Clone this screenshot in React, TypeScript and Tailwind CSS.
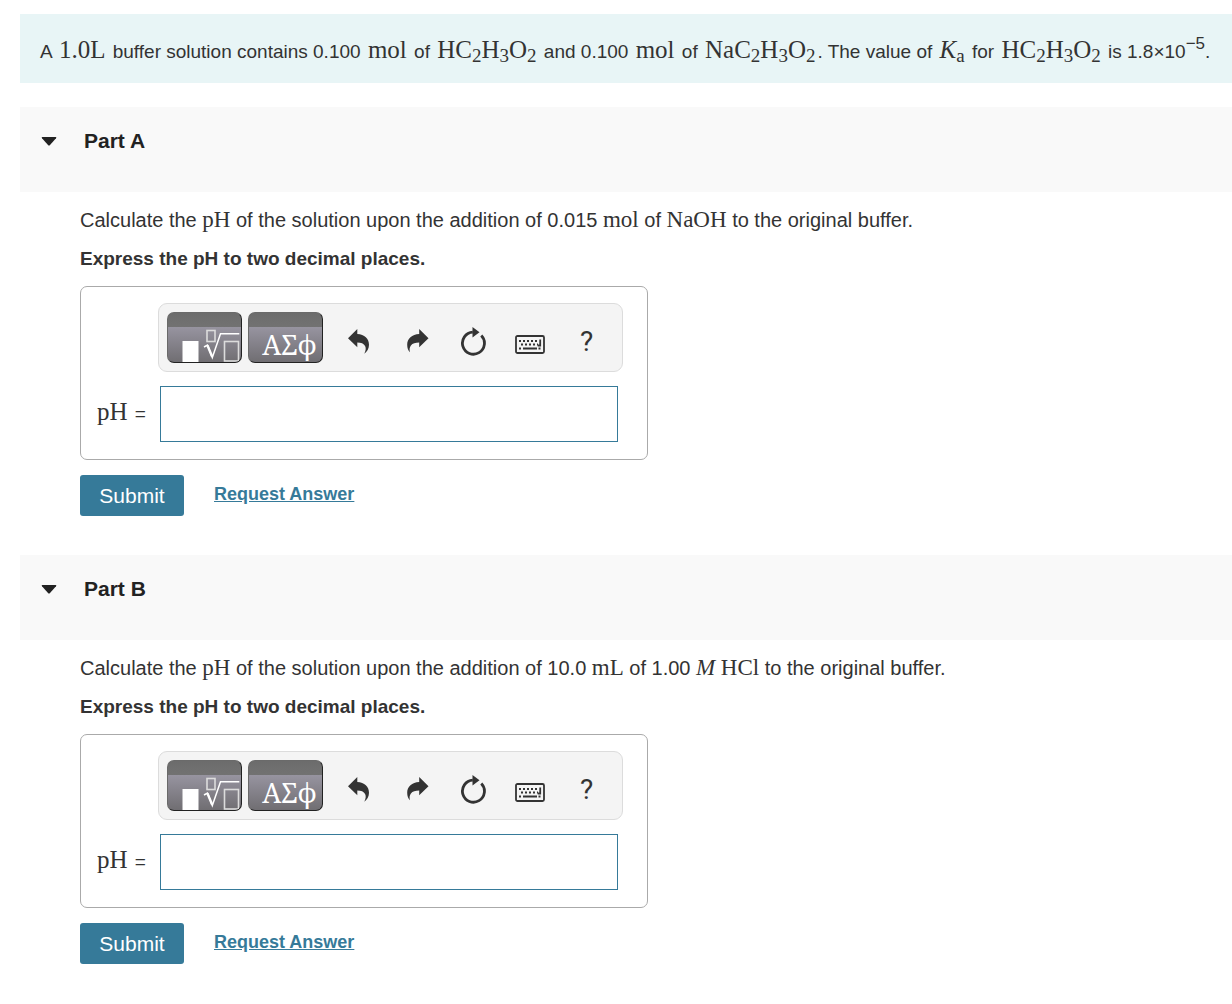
import type { ReactNode } from "react";

type MathProps = {
  children: ReactNode;
  italic?: boolean;
  large?: boolean;
};

function MathText({ children, italic = false, large = false }: MathProps) {
  const size = large ? "mx-0.5 text-[25px]" : "text-[23px]";
  const style = italic ? "italic" : "";
  return <span className={`font-['Liberation_Serif',serif] leading-none ${size} ${style}`}>{children}</span>;
}

function Sub({ children }: { children: ReactNode }) {
  return <sub className="bottom-[-4px] text-[19px] not-italic">{children}</sub>;
}

function AceticAcid({ prefix }: { prefix: string }) {
  return (
    <MathText large>
      {prefix}C<Sub>2</Sub>H<Sub>3</Sub>O<Sub>2</Sub>
    </MathText>
  );
}

function TemplateIcon() {
  return (
    <svg width="73" height="49" viewBox="0 0 73 49" fill="none" aria-hidden="true">
      <rect x="14.5" y="28" width="16" height="21" fill="#fff" />
      <rect x="39" y="17.5" width="8" height="11" stroke="#dcdcdc" strokeWidth="1.6" />
      <path d="M36 34l3.500-2 4.800 12.500 8.200-23.700h18.800" stroke="#fff" strokeWidth="1.500" />
      <path d="M39.500 32.500l4.600 11" stroke="#fff" strokeWidth="2.400" />
      <rect x="56.500" y="28.500" width="14" height="19.500" stroke="#dcdcdc" strokeWidth="1.600" />
    </svg>
  );
}

function UndoIcon() {
  return (
    <svg width="22" height="25" viewBox="0 0 22 25" fill="#333" aria-hidden="true">
      <path d="M0 9.300L9.300 0v5C16.500 5.300 21 9.500 21 15.700c0 4-2 7-4.700 9 1.500-3 1.900-5.500.8-7.600-1.300-2.500-4-3.500-7.800-3.500v4.700z" />
    </svg>
  );
}

function RedoIcon() {
  return (
    <svg width="26" height="25" viewBox="-4 0 26 25" fill="#333" aria-hidden="true">
      <path d="M21.500 9.300L12.200 0v5C5 5.300.200 9.500.200 15.700c0 3 .8 5.500 2.800 7.600-.8-3-.4-5 .9-6.800 1.700-2.200 4.500-2.900 8.300-2.900v4.700z" />
    </svg>
  );
}

function ResetIcon() {
  return (
    <svg width="26" height="30" viewBox="0 0 26 30" fill="none" aria-hidden="true">
      <path d="M21.300 8.500A11 11 0 1 1 12.800 5.200" stroke="#333" strokeWidth="2.800" />
      <path d="M12.500 0l7 5.200-7 5.400z" fill="#333" />
    </svg>
  );
}

function KeyboardIcon() {
  return (
    <svg width="30" height="19" viewBox="0 0 30 19" fill="none" aria-hidden="true">
      <rect x="1" y="1" width="28" height="17" rx="1.500" stroke="#333" strokeWidth="1.800" />
      <path d="M4 6h19M6 9.500h17M4 13.500h2.500M23.500 13.500h2.500" stroke="#333" strokeWidth="2" strokeDasharray="2 2" />
      <path d="M8 13.500h14M25.200 4.500v6h-2.500" stroke="#333" strokeWidth="1.800" />
    </svg>
  );
}

const paletteClass =
  "h-[51px] w-[75px] overflow-hidden rounded-[7px] border border-[#6a6a6a] border-r-[#222] border-b-[#222] bg-[linear-gradient(#6c6c6c_0,#727272_14px,#9794a0_14px,#706e72_100%)]";

const toolClass = "flex w-[57px] justify-center";

function Toolbar() {
  return (
    <div className="flex h-[69px] w-[465px] items-center rounded-[9px] border border-[#dcdcdc] bg-[#f4f4f4] pl-2">
      <div className="flex gap-1.5">
        <button type="button" aria-label="Templates" className={paletteClass}>
          <TemplateIcon />
        </button>
        <button
          type="button"
          aria-label="Symbols"
          className={`${paletteClass} pt-3.5 pl-2 text-center font-['Noto_Serif','Liberation_Serif',serif] text-[27px] leading-8 text-white`}
        >
          ΑΣϕ
        </button>
      </div>
      <div className="ml-[7px] grid h-full grid-cols-5 place-items-center pt-2">
        <button type="button" aria-label="Undo" className={toolClass}>
          <UndoIcon />
        </button>
        <button type="button" aria-label="Redo" className={toolClass}>
          <RedoIcon />
        </button>
        <button type="button" aria-label="Reset" className={toolClass}>
          <ResetIcon />
        </button>
        <button type="button" aria-label="Keyboard shortcuts" className={`${toolClass} pt-1.5`}>
          <KeyboardIcon />
        </button>
        <button
          type="button"
          aria-label="Help"
          className={`${toolClass} font-['Roboto',sans-serif] text-[28px] leading-8 text-[#333]`}
        >
          ?
        </button>
      </div>
    </div>
  );
}

type PartProps = {
  id: string;
  title: string;
  children: ReactNode;
};

function Part({ id, title, children }: PartProps) {
  return (
    <section className="mb-[39px]">
      <header className="flex h-[85px] bg-[#f9f9f9] pt-5 pl-5">
        <h2>
          <button type="button" aria-expanded="true" className="flex h-7 items-center gap-[27px] text-[21px] font-bold text-[#222]">
            <svg width="17" height="10" viewBox="0 0 17 10" fill="#222" aria-hidden="true">
              <path d="M2.500 1h13q1.500 0 .5 1.200L10 9q-1 1-2 0L2 2.200Q1 1 2.500 1z" />
            </svg>
            {title}
          </button>
        </h2>
      </header>
      <div className="pl-15">
        <p className="mt-3 h-8 text-[20px] leading-8">{children}</p>
        <p className="mt-[7px] h-8 leading-8 font-bold">Express the pH to two decimal places.</p>
        <div className="mt-[11px] h-[174px] w-[568px] rounded-[7px] border border-[#aaa] pt-4">
          <div className="pl-[77px]">
            <Toolbar />
          </div>
          <div className="mt-3.5 flex items-center pl-3.5">
            <label htmlFor={id} className="w-[65px] whitespace-nowrap">
              <MathText large>pH</MathText> =
            </label>
            <input id={id} type="text" className="h-14 w-[458px] border border-[#367a99] bg-white px-2" />
          </div>
        </div>
        <div className="mt-[15px] flex">
          <button type="button" className="h-[41px] w-[104px] rounded-[3px] bg-[#367a99] text-[21px] leading-[39px] text-white">
            Submit
          </button>
          <a href="#request" className="ml-[30px] text-[18px] leading-[38px] font-bold text-[#367a99] underline">
            Request Answer
          </a>
        </div>
      </div>
    </section>
  );
}

export default function App() {
  return (
    <main className="overflow-x-hidden bg-white pt-3.5 pl-5 font-['Liberation_Sans',sans-serif] text-[19px] text-[#333]">
      <div className="mb-6 flex h-[69px] items-center bg-[#e8f5f6] pt-1.5 pl-5">
        <p className="whitespace-nowrap">
          A <MathText large>1.0L</MathText> buffer solution contains 0.100 <MathText large>mol</MathText> of{" "}
          <AceticAcid prefix="H" /> and 0.100 <MathText large>mol</MathText> of <AceticAcid prefix="Na" />. The value of{" "}
          <MathText large italic>
            K<Sub>a</Sub>
          </MathText>{" "}
          for <AceticAcid prefix="H" /> is 1.8×10<sup className="text-[17px]">−5</sup>.
        </p>
      </div>
      <Part id="answer-a" title="Part A">
        Calculate the <MathText>pH</MathText> of the solution upon the addition of 0.015 <MathText>mol</MathText> of{" "}
        <MathText>NaOH</MathText> to the original buffer.
      </Part>
      <Part id="answer-b" title="Part B">
        Calculate the <MathText>pH</MathText> of the solution upon the addition of 10.0 <MathText>mL</MathText> of 1.00{" "}
        <MathText italic>M</MathText> <MathText>HCl</MathText> to the original buffer.
      </Part>
    </main>
  );
}
